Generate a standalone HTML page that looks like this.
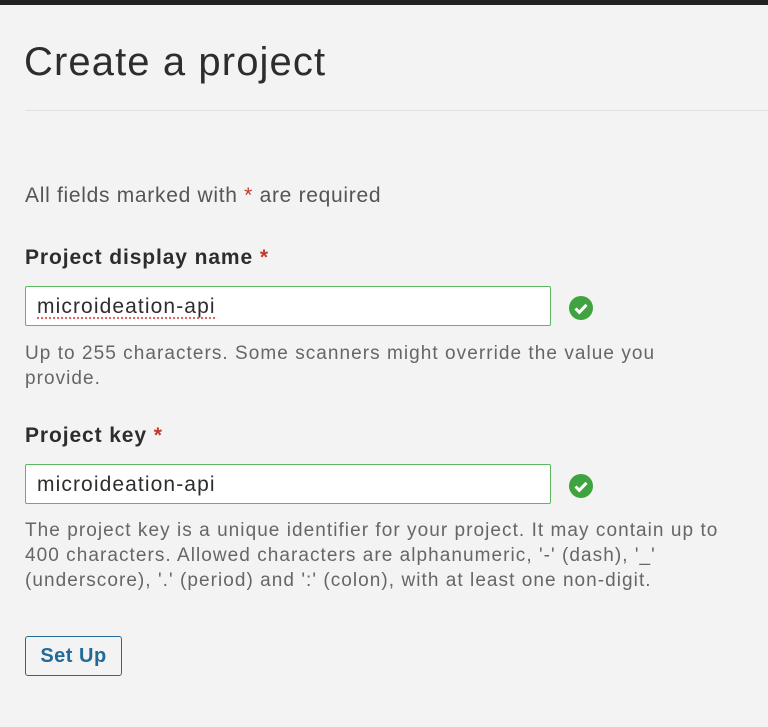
<!DOCTYPE html>
<html><head><style>
body{margin:0;background:#f3f3f3;font-family:"Liberation Sans",sans-serif;width:768px;height:727px;overflow:hidden;position:relative;color:#333}
.a{position:absolute;white-space:nowrap}
.bar{position:absolute;left:0;top:0;width:768px;height:5px;background:#222}
h1{position:absolute;left:24px;top:40px;margin:0;font-weight:normal;font-size:40px;letter-spacing:1.1px;color:#2d2d2d}
.hr{position:absolute;left:25px;right:0;top:110px;height:1px;background:#e0e0e0}
.lbl{font-weight:bold;font-size:21px;letter-spacing:0.9px;color:#2d2d2d}
.req{color:#c0392b}
.inp{position:absolute;left:25px;width:524px;height:38px;border:1.5px solid #5cb85c;background:#fff;border-radius:2px;box-sizing:content-box}
.inp span{position:absolute;left:11px;top:8px;font-size:21px;letter-spacing:1.1px;color:#2d2d2d}
.help{font-size:19px;letter-spacing:1.05px;color:#666;line-height:25px}
.btn{position:absolute;left:25px;top:636px;width:95px;height:38px;border:1.5px solid #236a97;border-radius:3px;color:#236a97;font-weight:bold;font-size:20px;letter-spacing:0.5px;text-align:center;line-height:38px}
</style></head><body>
<div class="bar"></div>
<h1>Create a project</h1>
<div class="hr"></div>
<div class="a" style="left:25px;top:184px;font-size:21px;letter-spacing:0.7px;color:#555">All fields marked with <span class="req">*</span> are required</div>
<div class="a lbl" style="left:25px;top:246px">Project display name <span class="req">*</span></div>
<div class="inp" style="top:286px"><span style="text-decoration:underline dotted #e06666;text-underline-offset:4px">microideation-api</span></div>
<svg class="a" style="left:569px;top:296px" width="24" height="24"><circle cx="12" cy="12" r="12" fill="#3fa33f"/><path d="M6.5 12.5l3.8 3.8 7.2-7.5" stroke="#fff" stroke-width="3" fill="none"/></svg>
<div class="a help" style="left:25px;top:341px">Up to 255 characters. Some scanners might override the value you<br>provide.</div>
<div class="a lbl" style="left:25px;top:424px">Project key <span class="req">*</span></div>
<div class="inp" style="top:464px"><span>microideation-api</span></div>
<svg class="a" style="left:569px;top:474px" width="24" height="24"><circle cx="12" cy="12" r="12" fill="#3fa33f"/><path d="M6.5 12.5l3.8 3.8 7.2-7.5" stroke="#fff" stroke-width="3" fill="none"/></svg>
<div class="a help" style="left:25px;top:518px">The project key is a unique identifier for your project. It may contain up to<br>400 characters. Allowed characters are alphanumeric, '-' (dash), '_'<br>(underscore), '.' (period) and ':' (colon), with at least one non-digit.</div>
<div class="btn">Set Up</div>
</body></html>
